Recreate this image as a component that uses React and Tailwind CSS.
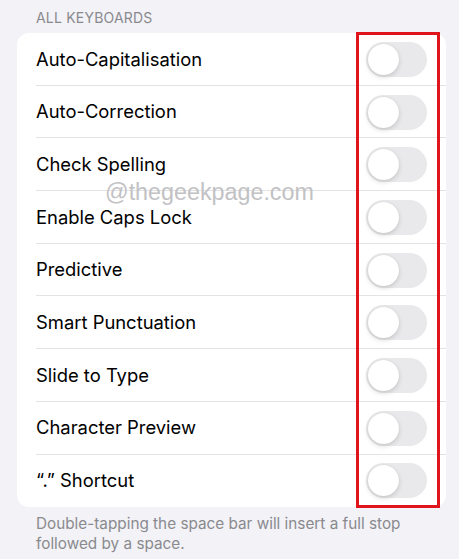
import React from "react";

const rows = [
  "Auto-Capitalisation",
  "Auto-Correction",
  "Check Spelling",
  "Enable Caps Lock",
  "Predictive",
  "Smart Punctuation",
  "Slide to Type",
  "Character Preview",
  "\u201C.\u201D Shortcut",
];

function Toggle() {
  return (
    <div className="w-[61px] h-[35px] rounded-full bg-[#e9e9eb] p-[2px] flex items-center">
      <div className="w-[31px] h-[31px] rounded-full bg-white shadow-[0_2px_5px_rgba(0,0,0,0.15),0_0_1px_rgba(0,0,0,0.12)]" />
    </div>
  );
}

export default function App() {
  return (
    <div
      className="w-[459px] h-[559px] bg-[#f2f2f7] overflow-hidden relative flex flex-col"
      style={{ fontFamily: "Inter, 'Liberation Sans', sans-serif" }}
    >
      <div className="pl-[36px] pt-[7px] h-[33px] text-[14px] text-[#8a8a8e] tracking-[0.2px]">
        ALL KEYBOARDS
      </div>
      <div className="ml-[17px] mr-[13px] bg-white rounded-[12px] relative flex flex-col">
        {rows.map((r, i) => (
          <div key={i} className="relative h-[52.7px] flex items-center justify-between pl-[19px] pr-[19px]">
            <span className="text-[18.4px] text-black">{r}</span>
            <Toggle />
            {i < rows.length - 1 && (
              <div className="absolute bottom-0 left-[19px] right-0 h-px bg-[#e3e3e6]" />
            )}
          </div>
        ))}
        <div className="absolute left-[339px] top-[-1px] w-[84px] h-[476px] border-[3px] border-[#e0141b] pointer-events-none" />
      </div>
      <div className="pl-[36px] pr-[30px] pt-[7px] text-[15.3px] leading-[20px] text-[#8a8a8e]">
        Double-tapping the space bar will insert a full stop followed by a space.
      </div>
      <div className="absolute left-[105px] top-[175px] text-[23.3px] text-[#c2c2c4] pointer-events-none" style={{ fontFamily: "'Liberation Sans', Arial, sans-serif" }}>
        @thegeekpage.com
      </div>
    </div>
  );
}
